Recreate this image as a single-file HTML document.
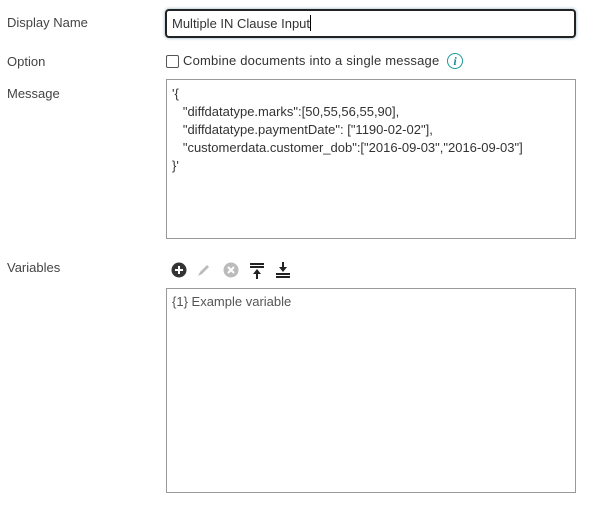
<!DOCTYPE html>
<html><head><style>
body{margin:0;width:600px;height:524px;background:#fff;font-family:"Liberation Sans",sans-serif;font-size:13px;color:#333;position:relative;overflow:hidden}
.l{position:absolute;left:7px;color:#444}
.box{position:absolute;left:166px;width:408px;border:1px solid #999;background:#fff}
</style></head><body>
<div class="l" style="top:15px">Display Name</div>
<div style="position:absolute;left:165px;top:9px;width:402px;height:25px;border:2px solid #222;border-radius:4px;box-shadow:0 0 3px #8ab;line-height:25px;padding-left:5px">Multiple IN Clause Input<span style="display:inline-block;width:1px;height:16px;background:#000;vertical-align:-3px"></span></div>
<div class="l" style="top:54px">Option</div>
<div style="position:absolute;left:166px;top:55px;width:11px;height:11px;border:1px solid #555;border-radius:2px"></div>
<div style="position:absolute;left:183px;top:53px;letter-spacing:0.2px">Combine documents into a single message</div>
<div style="position:absolute;left:447px;top:53px;width:14px;height:14px;border:1.5px solid #1a9a9a;border-radius:50%;color:#1a8a9a;font-style:italic;font-weight:bold;font-family:'Liberation Serif',serif;font-size:12px;text-align:center;line-height:14px">i</div>
<div class="l" style="top:86px">Message</div>
<div class="box" style="top:79px;height:158px">
<div style="padding:5px 0 0 5px;line-height:18px;white-space:pre">'{
   "diffdatatype.marks":[50,55,56,55,90],
   "diffdatatype.paymentDate": ["1190-02-02"],
   "customerdata.customer_dob":["2016-09-03","2016-09-03"]
}'</div></div>
<div class="l" style="top:260px">Variables</div>
<svg style="position:absolute;left:170px;top:261px" width="130" height="20">
<circle cx="9" cy="9" r="7.5" fill="#333"/><path d="M9 5v8M5 9h8" stroke="#fff" stroke-width="2"/>
<path d="M28 15l2-4 7-7 2 2-7 7z" fill="#bbb"/>
<circle cx="61" cy="9" r="7.5" fill="#bbb"/><path d="M58 6l6 6M64 6l-6 6" stroke="#fff" stroke-width="2"/>
<path d="M80 3h14M80 6h14" stroke="#222" stroke-width="2"/><path d="M87 8l-4 5h3v5h2v-5h3z" fill="#222"/>
<path d="M106 13h14M106 16h14" stroke="#222" stroke-width="2"/><path d="M113 11l-4-5h3v-5h2v5h3z" fill="#222"/>
</svg>
<div class="box" style="top:288px;height:203px"><div style="padding:5px 0 0 5px;color:#555">{1} Example variable</div></div>
</body></html>
